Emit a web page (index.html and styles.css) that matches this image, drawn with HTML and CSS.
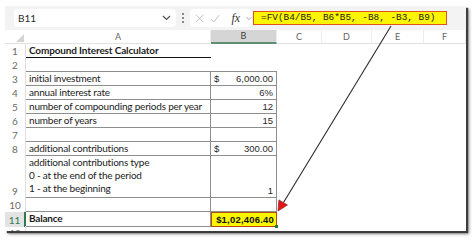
FILE: index.html
```html
<!doctype html>
<html>
<head>
    <meta charset="UTF-8" />
    <title>Compound Interest Calculator</title>
    <link rel="stylesheet" href="styles.css">
</head>
<body>
    <div class="window">
        <div class="fbar">
            <div class="namebox">
                <span>B11</span>
                <svg width="9" height="6" viewBox="0 0 9 6"><path d="M1 1 L4.5 4.5 L8 1" fill="none" stroke="#555" stroke-width="1.2"/></svg>
            </div>
            <div class="dots"><i></i><i></i><i></i></div>
            <div class="fxbox">
                <svg width="11" height="11" viewBox="0 0 11 11"><path d="M1 1 L10 10 M10 1 L1 10" stroke="#b5b5b5" stroke-width="1"/></svg>
                <svg width="12" height="11" viewBox="0 0 12 11"><path d="M1 6 L4.5 9.5 L11 1.5" fill="none" stroke="#b5b5b5" stroke-width="1"/></svg>
                <span class="fx">fx</span>
                <svg width="7" height="5" viewBox="0 0 7 5"><path d="M0.5 1 L3.5 4 L6.5 1" fill="none" stroke="#999" stroke-width="1"/></svg>
            </div>
            <div class="formula">=FV(B4/B5, B6*B5, -B8, -B3, B9)</div>
        </div>

        <div class="colheads">
            <div class="corner"><i></i></div>
            <div class="ch">A</div>
            <div class="ch sel">B</div>
            <div class="ch">C</div>
            <div class="ch">D</div>
            <div class="ch">E</div>
            <div class="ch">F</div>
        </div>

        <div class="r"><div class="rh">1</div><div class="a title">Compound Interest Calculator</div><div class="b"></div></div>
        <div class="r"><div class="rh">2</div><div class="a under"></div><div class="b under"></div></div>
        <div class="r"><div class="rh">3</div><div class="a t">initial investment</div><div class="b t money"><span>$</span><span>6,000.00</span></div></div>
        <div class="r"><div class="rh">4</div><div class="a t">annual interest rate</div><div class="b t num">6%</div></div>
        <div class="r"><div class="rh">5</div><div class="a t">number of compounding periods per year</div><div class="b t num">12</div></div>
        <div class="r"><div class="rh">6</div><div class="a t">number of years</div><div class="b t num">15</div></div>
        <div class="r"><div class="rh">7</div><div class="a t"></div><div class="b t"></div></div>
        <div class="r"><div class="rh">8</div><div class="a t">additional contributions</div><div class="b t money"><span>$</span><span>300.00</span></div></div>
        <div class="r tall">
            <div class="rh">9</div>
            <div class="a t">additional contributions type<br>0 - at the end of the period<br>1 - at the beginning</div>
            <div class="b t num">1</div>
        </div>
        <div class="r"><div class="rh">10</div><div class="a t"></div><div class="b t"></div></div>
        <div class="r"><div class="rh selrow">11</div><div class="a t bold">Balance</div><div class="b t num result">$1,02,406.40<i class="handle"></i></div></div>
        <div class="r"><div class="rh">12</div><div class="a"></div><div class="b"></div></div>
    </div>

    <svg class="arrow" width="474" height="240" viewBox="0 0 474 240">
        <line x1="391" y1="26" x2="283.5" y2="202.5" stroke="#2b2b2b" stroke-width="1.1"/>
        <polygon points="278,211 287.5,205 278.9,199.9" fill="#e8141b" stroke="#7a1010" stroke-width="0.6"/>
    </svg>
</body>
</html>
```

FILE: styles.css
```css
body {
    margin: 0;
    background: #fff;
    font-family: Lato, "Noto Sans", sans-serif;
    font-size: 10px;
    color: #1c1c1c;
    position: relative;
    width: 474px;
    height: 240px;
    overflow: hidden;
}

.window {
    margin: 6px 0 0 5px;
    width: 461px;
    height: 225px;
    background: #fff;
    overflow: hidden;
    box-shadow: 2px 2px 1px #3d3d3d, 3px 3px 3px #8a8a8a;
}

/* formula bar */
.fbar {
    height: 24px;
    background: #f3f3f3;
    display: flex;
    align-items: center;
    padding-left: 9px;
}

.namebox {
    width: 162px;
    height: 18px;
    box-sizing: border-box;
    background: #fff;
    border-radius: 4px;
    display: flex;
    align-items: center;
    justify-content: space-between;
    padding: 0 5px 0 4px;
    color: #2a2a2a;
    font-size: 10px;
}

.dots {
    width: 14px;
    display: flex;
    flex-direction: column;
    align-items: center;
    gap: 2px;
}

.dots i {
    width: 2px;
    height: 2px;
    background: #666;
    border-radius: 1px;
}

.fxbox {
    width: 62px;
    height: 18px;
    background: #fff;
    border-radius: 4px;
    display: flex;
    align-items: center;
    gap: 6px;
    padding-left: 5px;
    box-sizing: border-box;
}

.fx {
    font-family: "Liberation Serif", serif;
    font-style: italic;
    font-size: 12px;
    color: #333;
    margin-left: 5px;
}

.formula {
    margin-left: 1px;
    width: 194px;
    height: 14px;
    box-sizing: border-box;
    background: #fbf600;
    border: 1.5px solid #e0531a;
    font-family: "Liberation Mono", monospace;
    font-size: 9.4px;
    line-height: 11px;
    padding-left: 7px;
    color: #1d1d1d;
}

/* grid */
.colheads {
    display: grid;
    grid-template-columns: 21px 185px 66px 45px 50px 52px 1fr;
    height: 14px;
    border-bottom: 1px solid #e2e2e2;
    box-sizing: border-box;
}

.corner {
    position: relative;
}

.corner i {
    position: absolute;
    right: 2px;
    bottom: 2px;
    width: 0;
    height: 0;
    border-left: 8px solid transparent;
    border-bottom: 8px solid #d4d4d4;
}

.ch {
    text-align: center;
    color: #666;
    font-size: 9px;
    line-height: 14px;
    border-right: 1px solid #ececec;
}

.ch.sel {
    background: #d5d5d5;
    color: #3e3e3e;
    border-bottom: 2px solid #5f8f73;
    line-height: 12px;
}

.r {
    display: grid;
    grid-template-columns: 21px 185px 66px 1fr;
    height: 14px;
}

.r.tall {
    height: 42px;
}

.rh {
    color: #6a6a6a;
    text-align: center;
    line-height: 14px;
    border-right: 1px solid #dedede;
    display: flex;
    align-items: flex-end;
    justify-content: center;
}

.rh.selrow {
    background: #e3e3e3;
    color: #2d7a4f;
    border-right: 2px solid #2d7a4f;
}

.a, .b {
    box-sizing: border-box;
    padding: 0 3px;
    line-height: 13px;
    white-space: nowrap;
}

.a {
    letter-spacing: -0.2px;
}

.title {
    font-weight: bold;
    font-size: 10px;
    letter-spacing: -0.15px;
    border-bottom: 1.5px solid #111;
}

.under {
    border-bottom: 1px solid #8e8e8e;
}

.t {
    border-right: 1px solid #8e8e8e;
    border-bottom: 1px solid #8e8e8e;
}

.bold {
    font-weight: bold;
}

.b {
    font-family: "Liberation Sans", Arial, sans-serif;
    font-size: 9.5px;
    color: #2a2a2a;
}

.money {
    display: flex;
    justify-content: space-between;
}

.num {
    display: flex;
    justify-content: flex-end;
    align-items: flex-end;
}

.result {
    position: relative;
    background: #fbf600;
    border: 1.5px solid #b44d13;
    font-weight: bold;
    color: #111;
    align-items: center;
    letter-spacing: 0.2px;
    padding-right: 2px;
}

.handle {
    position: absolute;
    right: -2px;
    bottom: -2px;
    width: 3px;
    height: 3px;
    background: #1f7a44;
}

.arrow {
    position: absolute;
    top: 0;
    left: 0;
    pointer-events: none;
}
```
